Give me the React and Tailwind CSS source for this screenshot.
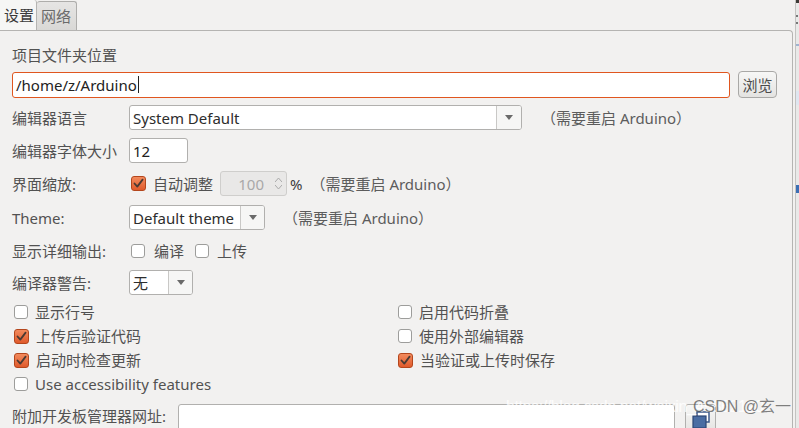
import React from 'react';

const font = { fontFamily: "'Noto Sans', 'Noto Sans CJK SC', sans-serif" };

const Check = ({ on }) =>
  on ? (
    <span className="w-[15px] h-[15px] rounded-[3px] border border-[#b4461c] bg-gradient-to-b from-[#f28a5c] to-[#e05a2b] flex items-center justify-center shrink-0">
      <svg width="11" height="11" viewBox="0 0 11 11">
        <path d="M1.5 5.5 L4.3 8.6 L9.6 1.6" stroke="#4a3a33" strokeWidth="1.8" fill="none" strokeLinecap="round" strokeLinejoin="round" />
      </svg>
    </span>
  ) : (
    <span className="w-[14px] h-[14px] rounded-[3px] border border-[#9d9d9b] bg-white shrink-0" />
  );

const CheckItem = ({ on, label }) => (
  <div className="flex items-center h-6 gap-[7px]">
    <Check on={on} />
    <span className="text-[#525252]">{label}</span>
  </div>
);

const Select = ({ value, width, arrowW = 25 }) => (
  <div className={`flex h-[25px] rounded-[3px] border border-[#b1b0ae] bg-white overflow-hidden ${width}`}>
    <div className="flex-1 flex items-center pl-[3px] text-[#2d2d2d]">{value}</div>
    <div className="border-l border-[#c9c8c6] flex items-center justify-center bg-[#f6f6f5]" style={{ width: arrowW }}>
      <svg width="8" height="5" viewBox="0 0 8 5"><path d="M0 0 H8 L4 5 Z" fill="#6a6a6a" /></svg>
    </div>
  </div>
);

const Label = ({ children }) => (
  <div className="w-[117px] shrink-0 text-[#525252]">{children}</div>
);

const Note = () => <span className="text-[#5c5c5c]">（需要重启 Arduino）</span>;

export default function App() {
  return (
    <div className="w-[799px] h-[428px] overflow-hidden bg-[#f2f1f0] relative text-[15px] leading-5 flex" style={font}>
      <div className="w-[795px] flex flex-col">
        <div className="h-[3px] bg-[#3c3b37]" />
        <div className="flex h-[30px] items-end">
          <div className="w-[37px] h-[30px] bg-[#f6f6f5] border-r border-[#b5b4b2] rounded-tr-[3px] flex items-center pl-[4px] text-[#3a3a3a]">设置</div>
          <div className="w-[40px] h-[29px] bg-gradient-to-b from-[#e6e5e4] to-[#d9d8d6] border border-b-0 border-l-0 border-[#aeadab] rounded-t-[3px] flex items-center pl-[4px] text-[#6a6a6a]">网络</div>
          <div className="flex-1" />
        </div>
        <div className="flex-1 border-t border-r border-[#b5b4b2] rounded-tr-[4px] mr-[2px] pl-3 pt-[14px] relative">
          <div className="h-5 text-[#525252]">项目文件夹位置</div>
          <div className="mt-[6px] h-[27px] flex items-center">
            <div className="w-[718px] h-[26px] bg-white border border-[#e0561f] rounded-[3px] flex items-center pl-[3px] text-[#222]">
              /home/z/Arduino<span className="w-px h-[17px] bg-[#222] ml-px" />
            </div>
            <div className="ml-2 w-[39px] h-[27px] rounded-[4px] border border-[#a9a8a6] bg-gradient-to-b from-[#f7f7f6] to-[#e4e3e1] flex items-center justify-center text-[#4c4c4c]">浏览</div>
          </div>

          <div className="mt-[7px] h-[25px] flex items-center">
            <Label>编辑器语言</Label>
            <Select value="System Default" width="w-[393px]" />
            <span className="ml-[19px]"><Note /></span>
          </div>

          <div className="mt-[8px] h-[25px] flex items-center">
            <Label>编辑器字体大小</Label>
            <div className="w-[59px] h-[25px] bg-white border border-[#b1b0ae] rounded-[3px] flex items-center pl-[3px] text-[#222]">12</div>
          </div>

          <div className="mt-[8px] h-[25px] flex items-center">
            <Label>界面缩放:</Label>
            <div className="ml-[2px]"><Check on /></div>
            <span className="ml-[7px] text-[#525252]">自动调整</span>
            <div className="ml-[7px] w-[67px] h-[25px] bg-[#e9e8e7] border border-[#cfcecc] rounded-[3px] flex">
              <div className="flex-1 flex items-center justify-end pr-[6px] text-[#a9a9a9]">100</div>
              <div className="w-[16px] flex flex-col items-center justify-center gap-[3px]">
                <svg width="7" height="4" viewBox="0 0 7 4"><path d="M0 4 L3.5 0 L7 4" stroke="#aaa" fill="none" /></svg>
                <svg width="7" height="4" viewBox="0 0 7 4"><path d="M0 0 L3.5 4 L7 0" stroke="#aaa" fill="none" /></svg>
              </div>
            </div>
            <span className="ml-[3px] text-[#3c3c3c]">%</span>
            <span className="ml-[8px]"><Note /></span>
          </div>

          <div className="mt-[9px] h-[25px] flex items-center">
            <Label>Theme:</Label>
            <Select value="Default theme" width="w-[136px]" arrowW={24} />
            <span className="ml-[18px]"><Note /></span>
          </div>

          <div className="mt-[8px] h-[25px] flex items-center">
            <Label>显示详细输出:</Label>
            <div className="ml-[2px] flex items-center gap-[9px]"><Check /><span className="text-[#525252]">编译</span></div>
            <div className="ml-[11px] flex items-center gap-[8px]"><Check /><span className="text-[#525252]">上传</span></div>
          </div>

          <div className="mt-[7px] h-[25px] flex items-center">
            <Label>编译器警告:</Label>
            <Select value="无" width="w-[64px]" arrowW={24} />
          </div>

          <div className="mt-[5px] pl-[2px] grid grid-cols-[384px_1fr]">
            <div className="flex flex-col">
              <CheckItem label="显示行号" />
              <CheckItem on label="上传后验证代码" />
              <CheckItem on label="启动时检查更新" />
              <CheckItem label="Use accessibility features" />
            </div>
            <div className="flex flex-col">
              <CheckItem label="启用代码折叠" />
              <CheckItem label="使用外部编辑器" />
              <CheckItem on label="当验证或上传时保存" />
            </div>
          </div>

          <div className="mt-[8px] h-[25px] flex items-start">
            <div className="w-[166px] shrink-0 text-[#525252] leading-[25px]">附加开发板管理器网址:</div>
            <div className="w-[497px] h-[30px] bg-white border border-[#b1b0ae] rounded-[3px]" />
            <div className="ml-[10px] w-[31px] h-[30px] rounded-[3px] border border-[#b1b0ae] bg-gradient-to-b from-[#f7f7f6] to-[#e4e3e1] flex items-start justify-center pt-[6px]">
              <svg width="20" height="18" viewBox="0 0 20 18">
                <rect x="6" y="1" width="12" height="10" fill="#fff" stroke="#3d5a8a" strokeWidth="1.5" />
                <rect x="2" y="5" width="13" height="12" fill="#4a6da3" stroke="#2c4675" strokeWidth="1.2" />
              </svg>
            </div>
          </div>

          <div className="absolute left-[506px] top-[366px] text-[16px] text-white/80 tracking-tight pointer-events-none" style={{ fontFamily: "'Liberation Sans', sans-serif" }}>
            https://blog.csdn.net/weixin_45862120
          </div>
          <div className="absolute left-[693px] top-[366px] text-[16px] text-[#4a4a4a]/70 pointer-events-none" style={{ fontFamily: "'Liberation Sans', 'Noto Sans CJK SC', sans-serif" }}>
            CSDN @玄一
          </div>
        </div>
      </div>
      <div className="w-[4px] border-l border-[#c4c3c1] bg-[#e9e9e8] flex flex-col">
        <div className="h-[3px] bg-[#3c3b37]" />
        <div className="h-[12px]" />
        <div className="h-[2px] w-[2px] bg-[#777]" />
        <div className="h-[5px]" />
        <div className="h-[2px] w-[2px] bg-[#777]" />
        <div className="h-[20px]" />
        <div className="h-[2px] bg-[#9fb3d0]" />
        <div className="h-[45px]" />
        <div className="h-[14px] bg-[#dfe6f0]" />
        <div className="h-[80px]" />
        <div className="h-[8px] bg-[#3c6fb4]" />
      </div>
    </div>
  );
}
